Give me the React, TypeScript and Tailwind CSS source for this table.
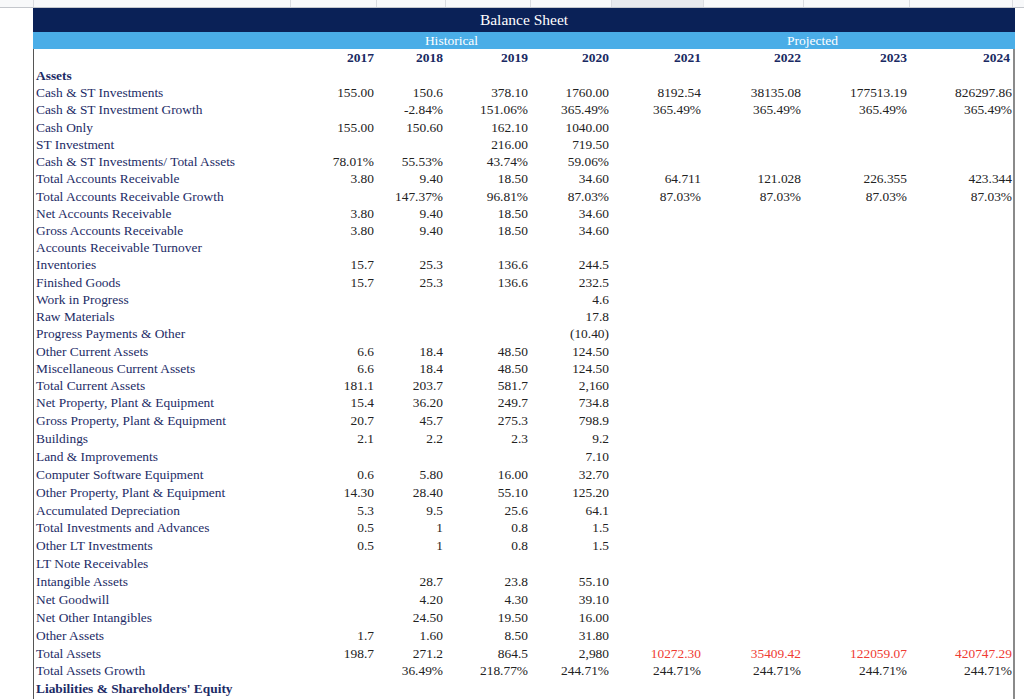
type Row = { label: string; bold?: boolean; red?: boolean; v?: string[] }

const rows: Row[] = [
  { label: "Assets", bold: true },
  { label: "Cash & ST Investments", v: ["155.00", "150.6", "378.10", "1760.00", "8192.54", "38135.08", "177513.19", "826297.86"] },
  { label: "Cash & ST Investment Growth", v: ["", "-2.84%", "151.06%", "365.49%", "365.49%", "365.49%", "365.49%", "365.49%"] },
  { label: "Cash Only", v: ["155.00", "150.60", "162.10", "1040.00"] },
  { label: "ST Investment", v: ["", "", "216.00", "719.50"] },
  { label: "Cash & ST Investments/ Total Assets", v: ["78.01%", "55.53%", "43.74%", "59.06%"] },
  { label: "Total Accounts Receivable", v: ["3.80", "9.40", "18.50", "34.60", "64.711", "121.028", "226.355", "423.344"] },
  { label: "Total Accounts Receivable Growth", v: ["", "147.37%", "96.81%", "87.03%", "87.03%", "87.03%", "87.03%", "87.03%"] },
  { label: "Net Accounts Receivable", v: ["3.80", "9.40", "18.50", "34.60"] },
  { label: "Gross Accounts Receivable", v: ["3.80", "9.40", "18.50", "34.60"] },
  { label: "Accounts Receivable Turnover" },
  { label: "Inventories", v: ["15.7", "25.3", "136.6", "244.5"] },
  { label: "Finished Goods", v: ["15.7", "25.3", "136.6", "232.5"] },
  { label: "Work in Progress", v: ["", "", "", "4.6"] },
  { label: "Raw Materials", v: ["", "", "", "17.8"] },
  { label: "Progress Payments & Other", v: ["", "", "", "(10.40)"] },
  { label: "Other Current Assets", v: ["6.6", "18.4", "48.50", "124.50"] },
  { label: "Miscellaneous Current Assets", v: ["6.6", "18.4", "48.50", "124.50"] },
  { label: "Total Current Assets", v: ["181.1", "203.7", "581.7", "2,160"] },
  { label: "Net Property, Plant & Equipment", v: ["15.4", "36.20", "249.7", "734.8"] },
  { label: "Gross Property, Plant & Equipment", v: ["20.7", "45.7", "275.3", "798.9"] },
  { label: "Buildings", v: ["2.1", "2.2", "2.3", "9.2"] },
  { label: "Land & Improvements", v: ["", "", "", "7.10"] },
  { label: "Computer Software Equipment", v: ["0.6", "5.80", "16.00", "32.70"] },
  { label: "Other Property, Plant & Equipment", v: ["14.30", "28.40", "55.10", "125.20"] },
  { label: "Accumulated Depreciation", v: ["5.3", "9.5", "25.6", "64.1"] },
  { label: "Total Investments and Advances", v: ["0.5", "1", "0.8", "1.5"] },
  { label: "Other LT Investments", v: ["0.5", "1", "0.8", "1.5"] },
  { label: "LT Note Receivables" },
  { label: "Intangible Assets", v: ["", "28.7", "23.8", "55.10"] },
  { label: "Net Goodwill", v: ["", "4.20", "4.30", "39.10"] },
  { label: "Net Other Intangibles", v: ["", "24.50", "19.50", "16.00"] },
  { label: "Other Assets", v: ["1.7", "1.60", "8.50", "31.80"] },
  { label: "Total Assets", red: true, v: ["198.7", "271.2", "864.5", "2,980", "10272.30", "35409.42", "122059.07", "420747.29"] },
  { label: "Total Assets Growth", v: ["", "36.49%", "218.77%", "244.71%", "244.71%", "244.71%", "244.71%", "244.71%"] },
  { label: "Liabilities & Shareholders' Equity", bold: true },
]

const years = ["2017", "2018", "2019", "2020", "2021", "2022", "2023", "2024"]
const cols = "grid grid-cols-[257px_86px_69px_85px_81px_92px_100px_106px_103px]"

export default function App() {
  return (
    <div className="w-[1024px] h-[699px] overflow-hidden bg-white font-['Liberation_Serif','Times_New_Roman',serif]">
      {/* sheet column header strip */}
      <div className="flex h-[8px] bg-[#f8f9fa] border-b border-[#c4c7cc]">
        <div className="w-[34px] border-r border-[#dadce0]" />
        <div className="w-[257px] border-r border-[#dadce0]" />
        <div className="w-[86px] border-r border-[#dadce0]" />
        <div className="w-[69px] border-r border-[#dadce0]" />
        <div className="w-[85px] border-r border-[#dadce0]" />
        <div className="w-[81px] border-r border-[#dadce0]" />
        <div className="w-[92px] border-r border-[#dadce0] bg-[#e8eaed]" />
        <div className="w-[100px] border-r border-[#dadce0]" />
        <div className="w-[106px] border-r border-[#dadce0]" />
        <div className="w-[103px] border-r border-[#dadce0]" />
      </div>

      <div className="ml-[33px] w-[982px]">
        <div className="h-[24px] bg-[#0a2157] flex items-center justify-center text-white text-[15.5px] leading-none">
          Balance Sheet
        </div>
        <div className="h-[17px] bg-[#4aade7] flex text-white text-[13.5px] leading-[17px]">
          <div className="w-[258px]" />
          <div className="w-[321px] text-center">Historical</div>
          <div className="w-[401px] text-center">Projected</div>
        </div>

        <div className="border-l border-[#555] border-r-2 border-r-[#8a8a8a] pb-[20px]">
          <div className={`${cols} h-[18.4px] items-end pb-[2px] text-[13.5px] font-bold text-[#1a2a63] leading-[15px]`}>
            <div />
            {years.map((y) => (
              <div key={y} className="text-right pr-[3px]">{y}</div>
            ))}
          </div>

          {rows.map((r, i) => (
            <div
              key={r.label}
              className={`${cols} items-center text-[13.4px] leading-[16px] ${i < 19 ? "h-[17.22px]" : "h-[17.86px]"}`}
            >
              <div className={`pl-[2px] whitespace-nowrap text-[#1c2b66] ${r.bold ? "font-bold" : ""}`}>{r.label}</div>
              {years.map((y, j) => (
                <div
                  key={y}
                  className={`text-right whitespace-nowrap ${j === 7 ? "pr-[1px]" : "pr-[3px]"} ${
                    r.red && j > 3 ? "text-[#ef3b33]" : "text-[#222]"
                  }`}
                >
                  {r.v?.[j] ?? ""}
                </div>
              ))}
            </div>
          ))}
        </div>
      </div>
    </div>
  )
}
